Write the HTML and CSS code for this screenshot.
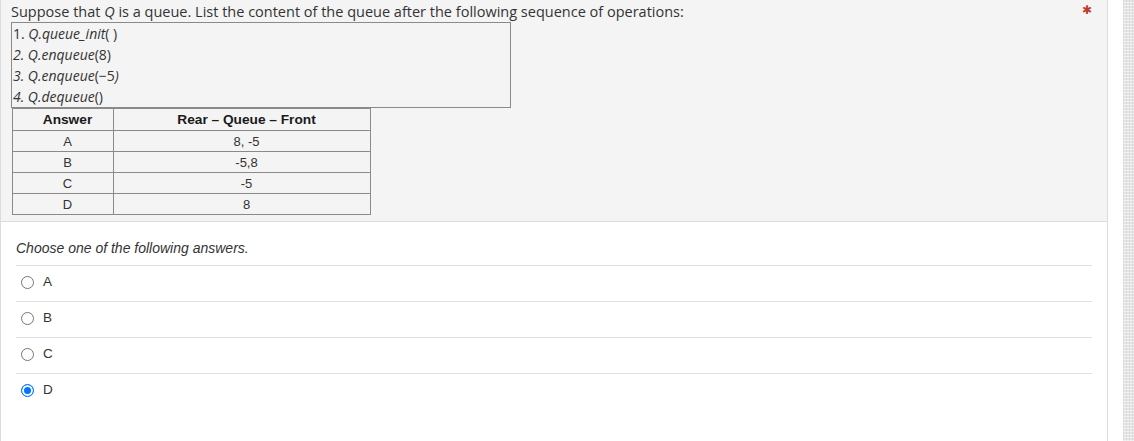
FILE: index.html
```html
<!DOCTYPE html>
<html>
<head>
<meta charset="utf-8">
<link rel="stylesheet" href="styles.css">
</head>
<body>
<div class="page">
  <div class="que">
    <div class="formulation">
      <div class="qtext">
        <p class="intro">Suppose that <span class="m">Q</span> is a queue. List the content of the queue after the following sequence of operations:</p>
        <div class="ops">
          <div class="op"><span class="n">1.</span> <span class="m">Q.queue_init</span>( )</div>
          <div class="op"><span class="m">2. Q.enqueue</span>(8)</div>
          <div class="op"><span class="m">3. Q.enqueue</span>(−5<span class="m">)</span></div>
          <div class="op"><span class="m">4. Q.dequeue</span>()</div>
        </div>
        <table class="choices">
          <tr><th class="c1">Answer</th><th class="c2">Rear – Queue – Front</th></tr>
          <tr><td>A</td><td>8, -5</td></tr>
          <tr><td>B</td><td>-5,8</td></tr>
          <tr><td>C</td><td>-5</td></tr>
          <tr><td>D</td><td>8</td></tr>
        </table>
      </div>
      <span class="req">✱</span>
    </div>
    <div class="ablock">
      <p class="prompt">Choose one of the following answers.</p>
      <div class="answer">
        <label class="opt"><span class="radio"></span><span class="lbl">A</span></label>
        <label class="opt"><span class="radio"></span><span class="lbl">B</span></label>
        <label class="opt"><span class="radio"></span><span class="lbl">C</span></label>
        <label class="opt"><span class="radio on"></span><span class="lbl">D</span></label>
      </div>
    </div>
  </div>
  <div class="gap"></div>
  <div class="strip"></div>
</div>
</body>
</html>
```
FILE: styles.css
```css
html, body { margin: 0; padding: 0; background: #fff; }
body { width: 1134px; height: 441px; overflow: hidden; }
.page { display: flex; height: 441px; }
.que {
  width: 1106px;
  border-left: 1px solid #dcdcdc;
  border-right: 1px solid #dcdcdc;
  display: flex; flex-direction: column;
}
.gap { width: 15px; }
.strip {
  flex: 1;
  background-color: #e6e6e6;
  background-image:
    repeating-linear-gradient(0deg, rgba(255,255,255,0.5) 0 1px, transparent 1px 3px),
    repeating-linear-gradient(90deg, rgba(200,200,200,0.5) 0 1px, transparent 1px 3px);
}
.formulation {
  background: #f4f4f4;
  height: 221px;
  border-bottom: 1px solid #dcdcdc;
  position: relative;
  padding: 0 0 0 10px;
}
.intro {
  margin: 0;
  padding-top: 1px;
  font-family: "Open Sans", "DejaVu Sans", sans-serif;
  font-size: 14.5px;
  line-height: 21px;
  color: #333;
}
.m { font-style: italic; }
.ops {
  width: 498px;
  border: 1px solid #8a8a8a;
  font-family: "Open Sans", "DejaVu Sans", sans-serif;
  font-size: 14px;
  color: #333;
}
.op { height: 21px; line-height: 21px; padding-left: 1px; }
.choices {
  border-collapse: collapse;
  margin-left: 1px;
  font-family: "Liberation Sans", Arial, sans-serif;
  font-size: 13px;
  color: #333;
}
.choices th, .choices td {
  border: 1px solid #8a8a8a;
  text-align: center;
  padding: 0 0 0 9px;
  height: 20px;
}
.choices th { height: 21px; font-weight: bold; font-size: 13.7px; color: #1a1a1a; }
.c1 { width: 91px; }
.c2 { width: 247px; }
.req {
  position: absolute;
  right: 15px; top: 3px;
  color: #c0392b;
  font-size: 12px;
  font-family: "DejaVu Sans", sans-serif;
}
.ablock { padding: 0 14px 0 15px; }
.prompt {
  margin: 17px 0 0;
  font-family: "Liberation Sans", Arial, sans-serif;
  font-style: italic;
  font-size: 14px;
  line-height: 18px;
  color: #333;
  padding-bottom: 8px;
}
.answer { width: 1076px; }
.opt {
  display: flex; align-items: center;
  height: 35px;
  border-top: 1px solid #dee2e6;
  font-family: "Liberation Sans", Arial, sans-serif;
  font-size: 13.5px;
  color: #333;
}
.radio {
  width: 11px; height: 11px;
  border: 1px solid #767676;
  border-radius: 50%;
  margin: 0 9px 0 5px;
  background: #fff;
  position: relative;
  top: -1px;
}
.radio.on {
  border: 1px solid #0075ff;
  background: #0075ff;
  box-shadow: inset 0 0 0 2px #fff;
}
.lbl { position: relative; top: -2px; }
```
